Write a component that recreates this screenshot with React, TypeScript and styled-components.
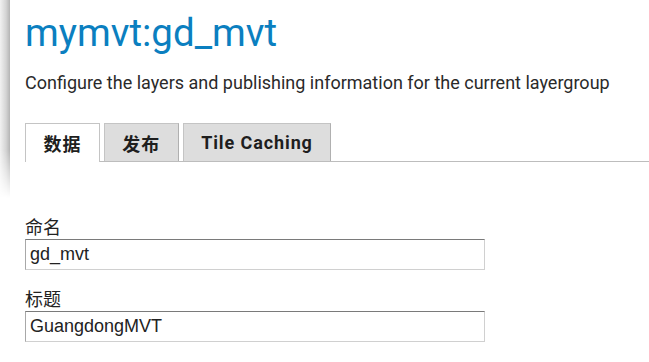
import React from "react";
import styled, { createGlobalStyle } from "styled-components";

const GlobalStyle = createGlobalStyle`
  html, body {
    margin: 0;
    padding: 0;
    background: #ffffff;
    overflow: hidden;
  }
  body {
    font-family: Roboto, "Noto Sans CJK SC", sans-serif;
    color: #222222;
  }
`;

const Page = styled.div`
  display: flex;
  align-items: flex-start;
  width: 649px;
  height: 362px;
  overflow: hidden;
`;

const EdgeShadow = styled.div`
  flex: 0 0 10px;
  height: 200px;
  background: linear-gradient(to right, #f1f1f1 0%, #d4d4d4 60%, #b4b4b4 100%);
  -webkit-mask-image: linear-gradient(to bottom, #000 150px, transparent 198px);
  mask-image: linear-gradient(to bottom, #000 150px, transparent 198px);
`;

const Main = styled.div`
  flex: 1;
  padding-left: 15px;
`;

const Title = styled.h1`
  margin: 9px 0 0;
  font-family: Roboto, sans-serif;
  font-weight: 400;
  font-size: 38.5px;
  line-height: 48px;
  color: #0b7fc0;
`;

const Subtitle = styled.p`
  margin: 15px 0 0;
  font-family: Roboto, sans-serif;
  font-size: 18px;
  line-height: 22px;
  color: #2a2a2a;
`;

const TabBar = styled.div`
  display: flex;
  align-items: flex-end;
  gap: 4px;
  margin-top: 29px;
  border-bottom: 1px solid #bdbdbd;
`;

const Tab = styled.div<{ active?: boolean }>`
  box-sizing: border-box;
  padding: 0 17.5px;
  display: flex;
  align-items: center;
  font-family: Roboto, "Noto Sans CJK SC", sans-serif;
  font-weight: 700;
  font-size: 18px;
  letter-spacing: 0.9px;
  color: #1e1e1e;
  background: ${(p) => (p.active ? "#ffffff" : "#dddddd")};
  border: 1px solid #c4c4c4;
  border-right-color: ${(p) => (p.active ? "#c4c4c4" : "#b0b0b0")};
  border-bottom: none;
  margin-bottom: ${(p) => (p.active ? "-1px" : "0")};
  height: ${(p) => (p.active ? "39px" : "38px")};
`;

const Form = styled.div`
  display: flex;
  flex-direction: column;
  margin-top: 53px;
`;

const Field = styled.div`
  display: flex;
  flex-direction: column;
  gap: 2px;
  margin-bottom: 17px;
`;

const Label = styled.label`
  font-family: "Noto Sans CJK SC", sans-serif;
  font-size: 18px;
  line-height: 22px;
  color: #222222;
`;

const Input = styled.input`
  width: 460px;
  height: 31px;
  box-sizing: border-box;
  margin: 0;
  padding: 0 4px;
  font-family: "Liberation Sans", Arial, sans-serif;
  font-size: 18px;
  color: #222222;
  background: #ffffff;
  border: 1px solid #d0d0d0;
  border-top-color: #7a7a7a;
  border-left-color: #a8a8a8;
  outline: none;
`;

const fields = [
  { label: "命名", value: "gd_mvt" },
  { label: "标题", value: "GuangdongMVT" },
  { label: "摘要", value: "" },
];

export default function App() {
  return (
    <>
      <GlobalStyle />
      <Page>
        <EdgeShadow />
        <Main>
          <Title>mymvt:gd_mvt</Title>
          <Subtitle>
            Configure the layers and publishing information for the current layergroup
          </Subtitle>
          <TabBar>
            <Tab active>数据</Tab>
            <Tab>发布</Tab>
            <Tab>Tile Caching</Tab>
          </TabBar>
          <Form>
            {fields.map((f) => (
              <Field key={f.label}>
                <Label>{f.label}</Label>
                <Input defaultValue={f.value} readOnly />
              </Field>
            ))}
          </Form>
        </Main>
      </Page>
    </>
  );
}
